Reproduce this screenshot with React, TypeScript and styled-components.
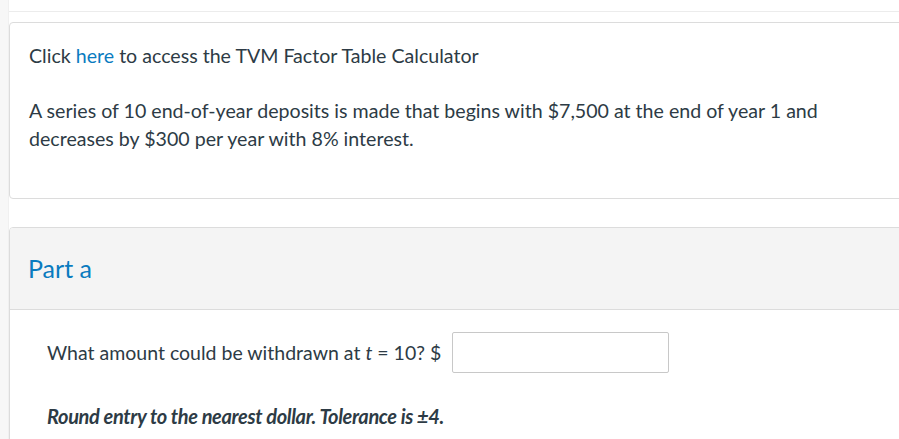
import styled, { createGlobalStyle } from "styled-components";

const GlobalStyle = createGlobalStyle`
  html, body {
    margin: 0;
    padding: 0;
    background: #ffffff;
  }
  body {
    font-family: Lato, "Open Sans", sans-serif;
    color: #2d3b45;
  }
`;

const Page = styled.div`
  display: flex;
  height: 439px;
  overflow: hidden;
`;

const Gutter = styled.div`
  width: 8px;
  flex-shrink: 0;
  background: #f7f7f7;
  border-right: 1px solid #f0f0f0;
`;

const Main = styled.div`
  flex: 1;
  min-width: 0;
  overflow: hidden;
`;

const TopRule = styled.div`
  height: 11px;
  border-bottom: 1px solid #ececec;
  margin-bottom: 10px;
`;

const Card = styled.section`
  width: calc(100% + 20px);
  border: 1px solid #dcdcdc;
  border-radius: 4px;
  background: #ffffff;
  box-sizing: border-box;
  overflow: hidden;
`;

const IntroCard = styled(Card)`
  padding: 19px 80px 45px 19px;
  margin-bottom: 28px;
`;

const PartCard = styled(Card)`
  min-height: 260px;
`;

const Text = styled.p`
  margin: 0;
  font-size: 19.6px;
  line-height: 28px;

  & + & {
    margin-top: 27px;
  }
`;

const Link = styled.a`
  color: #0a7bbf;
  text-decoration: none;
`;

const PartHeader = styled.header`
  background: #f4f4f4;
  border-bottom: 1px solid #dcdcdc;
  padding: 24px 20px 25px 18px;
`;

const PartTitle = styled.h2`
  margin: 0;
  font-size: 25px;
  font-weight: 400;
  line-height: 32px;
  color: #0a7bbf;
`;

const PartBody = styled.div`
  padding: 22px 20px 0 37px;
`;

const QuestionRow = styled.div`
  display: flex;
  align-items: center;
  gap: 11px;
  font-size: 19.5px;
  margin-bottom: 29px;
`;

const AnswerInput = styled.input`
  width: 217px;
  height: 41px;
  box-sizing: border-box;
  border: 1px solid #c8c8c8;
  border-radius: 2px;
  padding: 4px 8px;
  font-family: inherit;
  font-size: 16px;
  color: #2d3b45;
`;

const Note = styled.p`
  margin: 0;
  font-size: 20px;
  font-weight: 700;
  font-style: italic;
  letter-spacing: -0.35px;
  line-height: 28px;
`;

export default function App() {
  return (
    <>
      <GlobalStyle />
      <Page>
        <Gutter />
        <Main>
          <TopRule />
          <IntroCard>
            <Text>
              Click <Link href="#">here</Link> to access the TVM Factor Table
              Calculator
            </Text>
            <Text>
              A series of 10 end-of-year deposits is made that begins with
              $7,500 at the end of year 1 and decreases by $300 per year with 8%
              interest.
            </Text>
          </IntroCard>
          <PartCard>
            <PartHeader>
              <PartTitle>Part a</PartTitle>
            </PartHeader>
            <PartBody>
              <QuestionRow>
                <span>
                  What amount could be withdrawn at <i>t</i> = 10? $
                </span>
                <AnswerInput type="text" aria-label="Answer" />
              </QuestionRow>
              <Note>Round entry to the nearest dollar. Tolerance is ±4.</Note>
            </PartBody>
          </PartCard>
        </Main>
      </Page>
    </>
  );
}
